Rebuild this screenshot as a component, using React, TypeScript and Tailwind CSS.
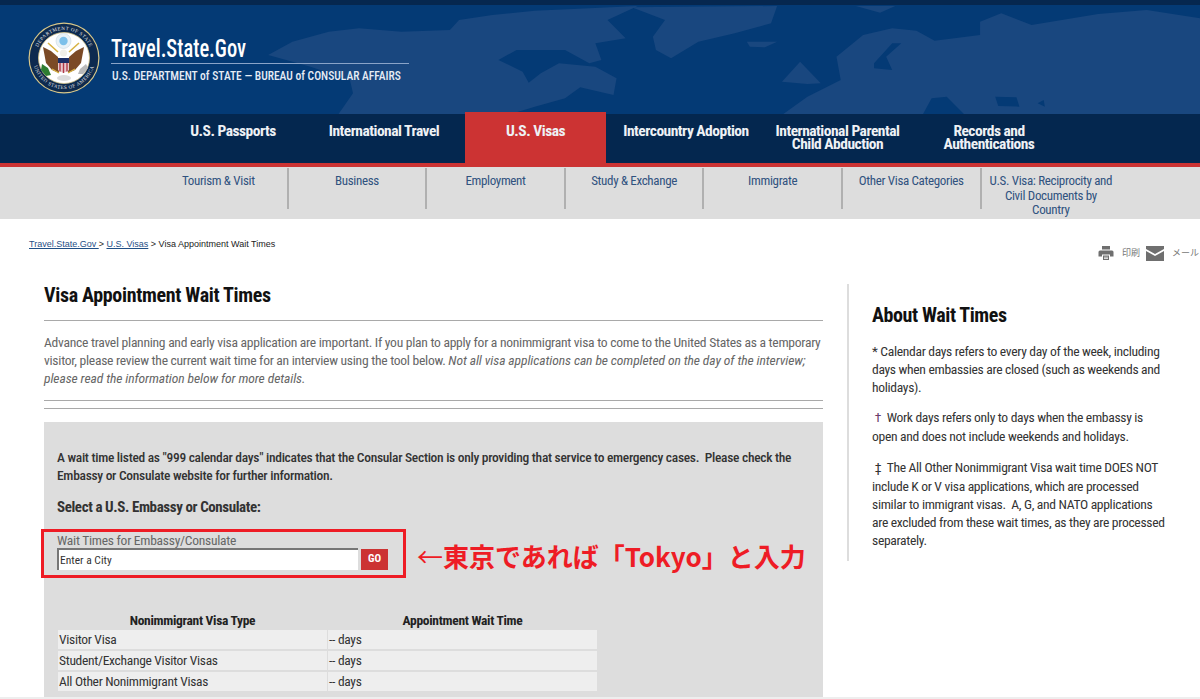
const mainNav = [
  { label: ["U.S. Passports"], w: "w-[166px]" },
  { label: ["International Travel"], w: "w-[149px] pr-[13px]" },
  { label: ["U.S. Visas"], w: "w-[141px]", active: true },
  { label: ["Intercountry Adoption"], w: "w-[160px]" },
  { label: ["International Parental", "Child Abduction"], w: "w-[143px]" },
  { label: ["Records and", "Authentications"], w: "w-[160px]" },
];

const subNav = [
  "Tourism & Visit",
  "Business",
  "Employment",
  "Study & Exchange",
  "Immigrate",
  "Other Visa Categories",
  "U.S. Visa: Reciprocity and Civil Documents by Country",
];

const rows = ["Visitor Visa", "Student/Exchange Visitor Visas", "All Other Nonimmigrant Visas"];

const roboto = "font-['Roboto',sans-serif] [font-stretch:75%]";

const Seal = () => (
  <svg width="72" height="72" viewBox="0 0 72 72" className="shrink-0">
    <circle cx="36" cy="36" r="35.5" fill="#d9c88a" />
    <circle cx="36" cy="36" r="34.3" fill="#0d2a4f" />
    <circle cx="36" cy="36" r="25.5" fill="#ffffff" stroke="#d9c88a" strokeWidth="0.8" />
    <circle cx="35.5" cy="19" r="7.5" fill="#e8f2f8" stroke="#c8d6e0" strokeWidth="0.6" />
    <circle cx="35.5" cy="19" r="4.2" fill="#7cc0ea" />
    <path d="M15 25 L23 29 L30 35 L31 51 L24 48 L18 41 Z" fill="#7b4a26" />
    <path d="M56 25 L48 29 L41 35 L40 51 L47 48 L53 41 Z" fill="#7b4a26" />
    <path d="M20 21 L30 30 M51 21 L41 30" stroke="#d8b445" strokeWidth="1.6" />
    <circle cx="35.5" cy="31" r="3.5" fill="#f1efe8" />
    <path d="M30 36 H41 V41 H30 Z" fill="#1c2f66" />
    <path d="M30 41 H41 V48 Q35.5 53 30 48 Z" fill="#e7c9cd" />
    <path d="M32 41 V49.5 M35.5 41 V51 M39 41 V49.5" stroke="#b23a48" strokeWidth="1.4" />
    <path d="M14 42 L20 46 L23 53 L18 54 L13 48 Z" fill="#2e7d32" />
    <path d="M58 42 L52 47 L50 52 L55 52 L60 46 Z" fill="#b9b9b9" />
    <path d="M24 47 L31 51 M47 47 L40 51" stroke="#d8b445" strokeWidth="1.4" />
    <ellipse cx="36" cy="56" rx="7" ry="3" fill="#dcdcdc" />
    <defs>
      <path id="sealTop" d="M8 36 A28 28 0 0 1 64 36" />
      <path id="sealBottom" d="M5 36 A31 31 0 0 0 67 36" />
    </defs>
    <text fontSize="5" fill="#e6e6e6" fontFamily="'Liberation Serif', serif" letterSpacing="0.5">
      <textPath href="#sealTop" startOffset="50%" textAnchor="middle">DEPARTMENT OF STATE</textPath>
    </text>
    <text fontSize="5" fill="#e6e6e6" fontFamily="'Liberation Serif', serif" letterSpacing="0.5">
      <textPath href="#sealBottom" startOffset="50%" textAnchor="middle">UNITED STATES OF AMERICA</textPath>
    </text>
  </svg>
);

// traced roughly from the banner, stretched to fit so the y values are 3x
const WorldMap = () => (
  <svg className="absolute -top-[5px] left-[250px]" width="950" height="115" viewBox="0 0 1568 345" preserveAspectRatio="none">
    <g fill="#19477f">
      <path d="M30 165 L70 125 L130 95 L180 85 L250 95 L330 90 L345 60 L400 45 L470 32 L560 25 L640 18 L590 60 L620 115 L570 130 L580 180 L560 190 L520 150 L440 150 L410 180 L450 215 L460 248 L480 220 L510 190 L570 200 L605 235 L600 285 L545 262 L520 295 L470 320 L425 345 L145 345 L170 280 L165 240 L100 200 Z" />
      <path d="M630 22 L870 18 L860 70 L800 100 L740 125 L695 175 L670 150 L665 110 L685 60 Z" />
      <path d="M1000 18 L1065 18 L1040 38 Z" />
      <path d="M820 125 L870 125 L850 142 L825 140 Z" />
      <path d="M878 245 L908 185 L942 250 L920 252 Z" />
      <path d="M878 345 L920 290 L975 240 L968 170 L1012 105 L1060 85 L1100 92 L1130 122 L1205 105 L1205 65 L1240 40 L1290 75 L1400 42 L1480 30 L1568 55 L1568 345 Z" />
    </g>
    <g fill="#043a75">
      <path d="M1030 190 L1060 130 L1075 130 L1050 170 L1060 210 L1030 205 Z" />
      <path d="M1110 345 L1125 295 L1150 290 L1180 345 Z" />
      <path d="M1230 290 L1265 292 L1270 320 L1235 318 Z" />
      <path d="M1300 310 L1310 300 L1312 320 Z" />
    </g>
  </svg>
);

const Header = () => (
  <header>
    <div className="h-[5px] bg-[#06274f]" />
    <div className="relative h-[109px] overflow-hidden bg-[#043a75]">
      <WorldMap />
      <div className="relative flex items-start gap-[11px] pl-[28px] pt-[17px]">
        <Seal />
        <div className={`${roboto} w-[298px] pt-[12px] text-white`}>
          <div className="h-[28px] origin-left scale-x-[0.775] text-[26.5px] leading-[28px] font-medium whitespace-nowrap">Travel.State.Gov</div>
          <div className="mt-px h-px bg-[#8aa4c8]" />
          <div className="mt-[3px] ml-px origin-left scale-x-[0.853] text-[13.5px] leading-[17px] font-medium whitespace-nowrap text-[#e6ecf5]">
            U.S. DEPARTMENT of STATE — BUREAU of CONSULAR AFFAIRS
          </div>
        </div>
      </div>
    </div>
  </header>
);

const MainNav = () => (
  <nav className={`${roboto} relative flex h-[49px] bg-[#04274f] pl-[150px] text-[15.5px] leading-[13px] font-bold tracking-[-0.5px] text-[#eef1f5]`}>
    {mainNav.map((item) => (
      <div
        key={item.label[0]}
        className={`${item.w} text-center ${item.active ? "-mt-[2px] h-[51px] bg-[#cc3333] pt-[13px]" : "pt-[11px]"}`}
      >
        {item.label.map((line) => (
          <div key={line}>{line}</div>
        ))}
      </div>
    ))}
  </nav>
);

const SubNav = () => (
  <div className="h-[56px] border-t-[4px] border-[#cc3333] bg-[#dddddd]">
    <div className={`${roboto} flex pl-[150px] pt-[1px] text-[13px] leading-[14.5px] tracking-[-0.33px] text-[#30527f]`}>
      {subNav.map((item, i) => (
        <div
          key={item}
          className={`h-[41px] w-[138.6px] px-[5px] pt-[6px] text-center ${i < 6 ? "border-r-2 border-[#b0b0b0]" : ""}`}
        >
          {item}
        </div>
      ))}
    </div>
  </div>
);

const Breadcrumb = () => (
  <div className="flex items-start justify-between pl-[29px] pt-[20px]">
    <div className="font-['Liberation_Sans',sans-serif] text-[9px] leading-[11px] text-[#222222]">
      <span className="text-[#1f4f86] underline">Travel.State.Gov </span>
      {" > "}
      <span className="text-[#1f4f86] underline">U.S. Visas</span>
      {" > Visa Appointment Wait Times"}
    </div>
    <div className="mt-[6px] flex items-center text-[9px] text-[#777777]">
      <svg width="16" height="16" viewBox="0 0 16 16" fill="#6f6f6f" className="ml-px">
        <path d="M4 1h8v3.5H4zM2 5.5h12a1.5 1.5 0 0 1 1.5 1.5v4.5H12V9.5H4v2H.5V7A1.5 1.5 0 0 1 2 5.5z" />
        <path d="M5 10.5h6V15H5z" />
        <path d="M6 11.7h4v.8H6zM6 13.2h4v.8H6z" fill="#ffffff" />
      </svg>
      <span className="ml-[8px] font-['Noto_Sans_CJK_JP',sans-serif]">印刷</span>
      <svg width="18" height="15" viewBox="0 0 18 15" fill="#6f6f6f" className="ml-[6px]">
        <path d="M0 0h18v3L9 8 0 3zM0 5l9 5 9-5v10H0z" />
      </svg>
      <span className="ml-[8px] w-[28px] whitespace-nowrap font-['Noto_Sans_CJK_JP',sans-serif]">メール</span>
    </div>
  </div>
);

const WaitTimesForm = () => (
  <div className={`${roboto} mt-[13px] h-[275px] bg-[#dddddd] pl-[13px] pt-[26px]`}>
    <p className="w-[750px] text-[13.5px] leading-[18px] font-medium tracking-[-0.3px] text-[#333333]">
      A wait time listed as "999 calendar days" indicates that the Consular Section is only providing that service to emergency cases.&nbsp; Please check the Embassy or Consulate website for further information.
    </p>
    <h3 className="mt-[13px] text-[15px] leading-[20px] font-bold tracking-[-0.4px] text-[#333333]">Select a U.S. Embassy or Consulate:</h3>
    <div className="relative mt-[15px] h-[60px]">
      <div className="absolute -left-[16px] -top-[3px] h-[49px] w-[365px] border-[3px] border-[#ee1c25]" />
      <div className="pt-[1px] text-[13.5px] leading-[14px] tracking-[-0.25px] text-[#666666]">Wait Times for Embassy/Consulate</div>
      <div className="mt-[1px] flex items-center gap-[3px]">
        <input
          readOnly
          value="Enter a City"
          className="h-[22px] w-[301px] border-2 border-b-0 border-r-0 border-[#767676] bg-white pl-[1px] text-[11.5px] text-[#333333]"
        />
        <button className="mt-px h-[21px] w-[27px] bg-[#cc3333] text-[11px] font-bold text-white">GO</button>
      </div>
      <div className="absolute left-[360px] top-[7px] font-['Noto_Sans_CJK_JP',sans-serif] text-[26px] leading-[34px] font-bold whitespace-nowrap text-[#ee1c25]">
        <span className="font-normal">←</span>東京であれば「Tokyo」と入力
      </div>
    </div>
    <table className="mt-[19px] w-[541px] border-separate border-spacing-x-[1px] border-spacing-y-[2px] text-[13.5px] tracking-[-0.3px]">
      <thead>
        <tr className="h-[15px] leading-[15px] font-bold text-[#222222]">
          <th className="w-[269px] font-bold">Nonimmigrant Visa Type</th>
          <th className="font-bold">Appointment Wait Time</th>
        </tr>
      </thead>
      <tbody>
        {rows.map((row) => (
          <tr key={row} className="h-[19px] bg-[#eeeeee] text-[#333333]">
            <td className="px-[1px] leading-[19px]">{row}</td>
            <td className="px-[1px] leading-[19px]">-- days</td>
          </tr>
        ))}
      </tbody>
    </table>
  </div>
);

const MainColumn = () => (
  <main className="ml-[44px] w-[779px]">
    <h1 className={`${roboto} h-[38px] border-b border-[#a9a9a9] text-[20px] leading-[24px] font-bold tracking-[-0.33px] text-[#111111]`}>
      Visa Appointment Wait Times
    </h1>
    <p className={`${roboto} mt-[12px] text-[13.6px] leading-[18px] tracking-[-0.28px] text-[#666666]`}>
      Advance travel planning and early visa application are important. If you plan to apply for a nonimmigrant visa to come to the United States as a temporary visitor, please review the current wait time for an interview using the tool below. <em className="tracking-[-0.1px]">Not all visa applications can be completed on the day of the interview; please read the information below for more details.</em>
    </p>
    <div className="mt-[13px] h-[9px] border-y border-[#a9a9a9]" />
    <WaitTimesForm />
  </main>
);

const Sidebar = () => (
  <aside className={`${roboto} mt-[1px] ml-[24px] h-[277px] w-[330px] border-l-2 border-[#dddddd] pl-[23px] pt-[18px] text-[13.6px] leading-[18px] tracking-[-0.32px] text-[#333333]`}>
    <h2 className="text-[20px] leading-[26px] font-bold tracking-[-0.4px] text-[#111111]">About Wait Times</h2>
    <p className="mt-[14px] w-[296px]">
      * Calendar days refers to every day of the week, including days when embassies are closed (such as weekends and holidays).
    </p>
    <p className="mt-[12px] w-[296px]">
      <span className="inline-block leading-[19px] text-[#6b3b6b]">&nbsp;†</span>&nbsp; Work days refers only to days when the embassy is open and does not include weekends and holidays.
    </p>
    <p className="mt-[13px] w-[296px]">
      <span className="inline-block leading-[19px]">&nbsp;‡</span>&nbsp; The All Other Nonimmigrant Visa wait time DOES NOT include K or V visa applications, which are processed similar to immigrant visas.&nbsp; A, G, and NATO applications are excluded from these wait times, as they are processed separately.
    </p>
  </aside>
);

export default function App() {
  return (
    <div className="relative h-[699px] w-[1200px] overflow-hidden bg-white">
      <Header />
      <MainNav />
      <SubNav />
      <Breadcrumb />
      <div className="mt-[22px] flex items-start">
        <MainColumn />
        <Sidebar />
      </div>
      <div className="absolute inset-x-0 bottom-0 h-[2px] bg-[#eeeeee]" />
    </div>
  );
}
